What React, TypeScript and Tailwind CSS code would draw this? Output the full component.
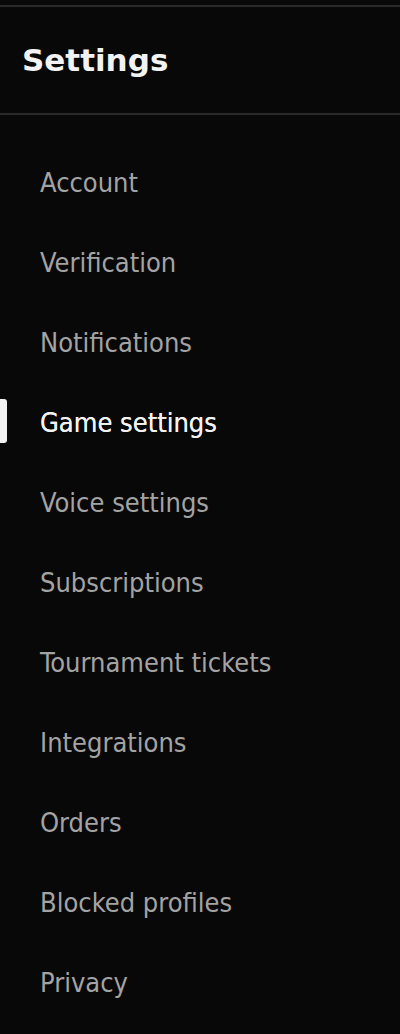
const items = [
  'Account',
  'Verification',
  'Notifications',
  'Game settings',
  'Voice settings',
  'Subscriptions',
  'Tournament tickets',
  'Integrations',
  'Orders',
  'Blocked profiles',
  'Privacy',
];

export default function App() {
  const active = 'Game settings';

  return (
    <div
      className="min-h-[1034px] w-[400px] bg-[#080808] pt-[5px]"
      style={{ fontFamily: '"DejaVu Sans Condensed", "DejaVu Sans", sans-serif' }}
    >
      <header className="flex h-[110px] items-center border-y-2 border-[#2a2a2a] pl-[22px]">
        <h1
          className="text-[31px] font-bold text-[#f2f2f2]"
          style={{ fontFamily: '"DejaVu Sans", sans-serif' }}
        >
          Settings
        </h1>
      </header>
      <nav className="pt-[28px]">
        <ul>
          {items.map((label) => {
            const isActive = label === active;
            return (
              <li key={label} className="relative flex h-[80px] items-center pl-[40px]">
                {isActive && (
                  <span className="absolute left-0 top-[16px] h-[44px] w-[7px] rounded-r-[3px] bg-[#f2f2f2]" />
                )}
                <span
                  className={
                    isActive
                      ? 'text-[27px] text-[#f2f2f2] [text-shadow:0_0_0.6px_#f2f2f2]'
                      : 'text-[27px] text-[#a3a3a3]'
                  }
                >
                  {label}
                </span>
              </li>
            );
          })}
        </ul>
      </nav>
    </div>
  );
}
